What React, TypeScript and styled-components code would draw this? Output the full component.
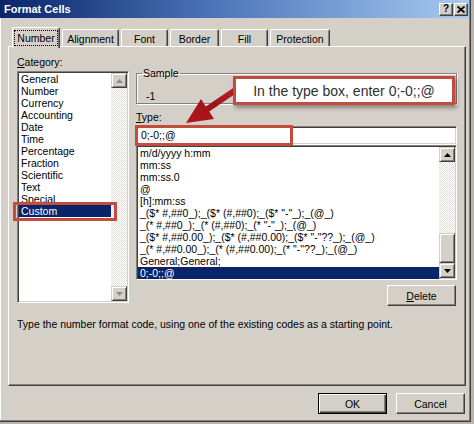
import React from 'react';
import styled, { createGlobalStyle } from 'styled-components';

const GlobalStyle = createGlobalStyle`
  html, body {
    margin: 0;
    padding: 0;
    background: #b8b4ac;
  }
  body {
    font-family: 'Liberation Sans', Arial, sans-serif;
    font-size: 10.5px;
    color: #000;
  }
`;

const Window = styled.div`
  position: relative;
  width: 471px;
  height: 422px;
  box-sizing: border-box;
  background: #d4d0c8;
  box-shadow: inset -1px -1px 0 #404040, inset -2px -2px 0 #808080,
    inset 1px 0 0 #fff;
  display: flex;
  flex-direction: column;
  overflow: hidden;
`;

const TitleBar = styled.div`
  height: 18px;
  margin-right: 2px;
  display: flex;
  align-items: center;
  justify-content: space-between;
  padding: 0 1px 0 4px;
  background: linear-gradient(to right, #0a246a 0%, #4a74b8 45%, #a6caf0 100%);
  color: #fff;
  font-size: 11px;
  font-weight: bold;
`;

const TitleButtons = styled.div`
  display: flex;
  gap: 1px;
`;

const TitleButton = styled.div`
  width: 14px;
  height: 13px;
  box-sizing: border-box;
  background: #d4d0c8;
  border: 1px solid;
  border-color: #fff #404040 #404040 #fff;
  box-shadow: inset -1px -1px 0 #808080;
  display: flex;
  align-items: center;
  justify-content: center;
  color: #000;
  font-size: 10px;
  font-weight: bold;
  line-height: 1;
`;

const Content = styled.div`
  flex: 1;
  display: flex;
  flex-direction: column;
  padding: 9px 5px 0 8px;
`;

const TabStrip = styled.div`
  height: 19px;
  display: flex;
  align-items: flex-end;
  gap: 2px;
  padding-left: 4px;
  position: relative;
  z-index: 1;
`;

const Tab = styled.div<{ $active?: boolean; $w: number }>`
  width: ${(p) => p.$w}px;
  height: ${(p) => (p.$active ? 21 : 17)}px;
  margin-bottom: ${(p) => (p.$active ? -2 : 0)}px;
  box-sizing: border-box;
  background: #d4d0c8;
  border-top: 1px solid #fff;
  border-left: 1px solid #fff;
  border-right: 1px solid #404040;
  box-shadow: inset -1px 0 0 #808080;
  border-radius: 2px 2px 0 0;
  display: flex;
  align-items: center;
  justify-content: center;
  padding-top: ${(p) => (p.$active ? 0 : 1)}px;
`;

const FocusText = styled.span`
  outline: 1px dotted #000;
  outline-offset: 1px;
  padding: 0 1px;
`;

const Panel = styled.div`
  width: 458px;
  height: 340px;
  box-sizing: border-box;
  border: 1px solid;
  border-color: #fff #404040 #404040 #fff;
  box-shadow: inset -1px -1px 0 #808080;
  padding: 9px 8px 0 8px;
  display: flex;
  flex-direction: column;
`;

const Columns = styled.div`
  display: flex;
  gap: 7px;
`;

const Column = styled.div<{ $w: number }>`
  width: ${(p) => p.$w}px;
  display: flex;
  flex-direction: column;
`;

const FieldLabel = styled.div<{ $gap?: number }>`
  line-height: 13px;
  height: 13px;
  margin-top: ${(p) => p.$gap ?? 0}px;
  margin-bottom: 2px;
`;

const GroupBox = styled.fieldset`
  margin: 11px 0 0;
  padding: 11px 9px 1px;
  min-inline-size: 0;
  border: 1px solid #808080;
  box-shadow: 1px 1px 0 #fff, inset 1px 1px 0 #fff;
  line-height: 12px;
  legend {
    padding: 0 1px;
    margin-left: -4px;
    line-height: 12px;
  }
`;

const SunkenBox = styled.div<{ $h: number }>`
  height: ${(p) => p.$h}px;
  box-sizing: border-box;
  background: #fff;
  border: 1px solid;
  border-color: #808080 #fff #fff #808080;
  box-shadow: inset 1px 1px 0 #404040, inset -1px -1px 0 #d4d0c8;
  padding: 1px;
  display: flex;
  overflow: hidden;
`;

const TextField = styled.div`
  height: 19px;
  box-sizing: border-box;
  background: #fff;
  border: 1px solid;
  border-color: #808080 #fff #fff #808080;
  box-shadow: inset 1px 1px 0 #404040, inset -1px -1px 0 #d4d0c8;
  padding: 0 4px;
  line-height: 17px;
`;

const Items = styled.div`
  flex: 1;
  min-width: 0;
  display: flex;
  flex-direction: column;
`;

const Item = styled.div<{ $selected?: boolean }>`
  height: 12px;
  flex: none;
  line-height: 12px;
  padding-left: 2px;
  white-space: nowrap;
  overflow: hidden;
  background: ${(p) => (p.$selected ? '#0a246a' : 'transparent')};
  color: ${(p) => (p.$selected ? '#fff' : '#000')};
`;

const ScrollBar = styled.div`
  width: 16px;
  flex: none;
  display: flex;
  flex-direction: column;
  background-color: #eeede9;
  background-image: repeating-conic-gradient(#fff 0 25%, #e2e0da 0 50%);
  background-size: 2px 2px;
`;

const ScrollButton = styled.div`
  height: 15px;
  flex: none;
  box-sizing: border-box;
  background: #d4d0c8;
  border: 1px solid;
  border-color: #d4d0c8 #404040 #404040 #d4d0c8;
  box-shadow: inset 1px 1px 0 #fff, inset -1px -1px 0 #808080;
  display: flex;
  align-items: center;
  justify-content: center;
`;

const Thumb = styled(ScrollButton)`
  height: 30px;
  margin-top: auto;
`;

const PushButton = styled.div<{ $default?: boolean }>`
  width: ${(p) => (p.$default ? 69 : 69)}px;
  height: 21px;
  box-sizing: border-box;
  background: #d4d0c8;
  border: 1px solid;
  border-color: ${(p) => (p.$default ? '#000' : '#fff #404040 #404040 #fff')};
  box-shadow: ${(p) =>
    p.$default
      ? 'inset 1px 1px 0 #fff, inset -1px -1px 0 #404040, inset -2px -2px 0 #808080'
      : 'inset -1px -1px 0 #808080'};
  display: flex;
  align-items: center;
  justify-content: center;
`;

const ButtonRow = styled.div<{ $gap: number; $top: number; $right?: number }>`
  display: flex;
  justify-content: flex-end;
  gap: ${(p) => p.$gap}px;
  margin-top: ${(p) => p.$top}px;
  padding-right: ${(p) => p.$right ?? 0}px;
`;

const Hint = styled.div`
  margin-top: 12px;
  line-height: 13px;
`;

const Key = styled.span`
  text-decoration: underline;
  text-underline-offset: 1px;
`;

const RedFrame = styled.div<{ $x: number; $y: number; $w: number; $h: number }>`
  position: absolute;
  left: ${(p) => p.$x}px;
  top: ${(p) => p.$y}px;
  width: ${(p) => p.$w}px;
  height: ${(p) => p.$h}px;
  box-sizing: border-box;
  border: 3px solid #c24c3f;
  pointer-events: none;
`;

const Callout = styled(RedFrame)`
  background: #fff;
  box-shadow: 2px 3px 4px rgba(0, 0, 0, 0.35);
  display: flex;
  align-items: center;
  justify-content: center;
  font-size: 14px;
  color: #2e2e2e;
  padding-top: 1px;
  z-index: 3;
`;

const Arrow = styled.svg`
  position: absolute;
  left: 180px;
  top: 80px;
  z-index: 2;
  pointer-events: none;
`;

const Triangle = ({ up, disabled }: { up?: boolean; disabled?: boolean }) => (
  <svg width="7" height="4" viewBox="0 0 7 4">
    <polygon
      points={up ? '3.5,0 7,4 0,4' : '0,0 7,0 3.5,4'}
      fill={disabled ? '#8e8c88' : '#000'}
    />
  </svg>
);

const categories = [
  'General',
  'Number',
  'Currency',
  'Accounting',
  'Date',
  'Time',
  'Percentage',
  'Fraction',
  'Scientific',
  'Text',
  'Special',
  'Custom',
];

const formats = [
  'm/d/yyyy h:mm',
  'mm:ss',
  'mm:ss.0',
  '@',
  '[h]:mm:ss',
  '_($* #,##0_);_($* (#,##0);_($* "-"_);_(@_)',
  '_(* #,##0_);_(* (#,##0);_(* "-"_);_(@_)',
  '_($* #,##0.00_);_($* (#,##0.00);_($* "-"??_);_(@_)',
  '_(* #,##0.00_);_(* (#,##0.00);_(* "-"??_);_(@_)',
  'General;General;',
  '0;-0;;@',
];

const tabs = [
  { label: 'Number', w: 48 },
  { label: 'Alignment', w: 57 },
  { label: 'Font', w: 47 },
  { label: 'Border', w: 49 },
  { label: 'Fill', w: 47 },
  { label: 'Protection', w: 60 },
];

export default function App() {
  return (
    <>
      <GlobalStyle />
      <Window>
        <TitleBar>
          <span>Format Cells</span>
          <TitleButtons>
            <TitleButton>?</TitleButton>
            <TitleButton>
              <svg width="8" height="7" viewBox="0 0 8 7">
                <path d="M0.5 0.5 L7.5 6.5 M7.5 0.5 L0.5 6.5" stroke="#000" strokeWidth="1.8" />
              </svg>
            </TitleButton>
          </TitleButtons>
        </TitleBar>

        <Content>
          <TabStrip>
            {tabs.map((t, i) => (
              <Tab key={t.label} $w={t.w} $active={i === 0}>
                {i === 0 ? <FocusText>{t.label}</FocusText> : t.label}
              </Tab>
            ))}
          </TabStrip>

          <Panel>
            <Columns>
              <Column $w={112}>
                <FieldLabel>
                  <Key>C</Key>ategory:
                </FieldLabel>
                <SunkenBox $h={232}>
                  <Items>
                    {categories.map((c) => (
                      <Item key={c} $selected={c === 'Custom'}>
                        {c}
                      </Item>
                    ))}
                  </Items>
                  <ScrollBar>
                    <ScrollButton>
                      <Triangle up disabled />
                    </ScrollButton>
                    <ScrollButton style={{ marginTop: 'auto' }}>
                      <Triangle disabled />
                    </ScrollButton>
                  </ScrollBar>
                </SunkenBox>
              </Column>

              <Column $w={321}>
                <GroupBox>
                  <legend>Sample</legend>
                  -1
                </GroupBox>
                <FieldLabel $gap={7}>
                  <Key>T</Key>ype:
                </FieldLabel>
                <TextField>0;-0;;@</TextField>
                <SunkenBox $h={135}>
                  <Items>
                    {formats.map((f, i) => (
                      <Item key={f} $selected={i === formats.length - 1}>
                        {f}
                      </Item>
                    ))}
                  </Items>
                  <ScrollBar>
                    <ScrollButton>
                      <Triangle up />
                    </ScrollButton>
                    <Thumb />
                    <ScrollButton>
                      <Triangle />
                    </ScrollButton>
                  </ScrollBar>
                </SunkenBox>
                <ButtonRow $gap={0} $top={5} $right={1}>
                  <PushButton>
                    <Key>D</Key>elete
                  </PushButton>
                </ButtonRow>
              </Column>
            </Columns>
            <Hint>
              Type the number format code, using one of the existing codes as a starting point.
            </Hint>
          </Panel>

          <ButtonRow $gap={9} $top={7} $right={1}>
            <PushButton $default>OK</PushButton>
            <PushButton>Cancel</PushButton>
          </ButtonRow>
        </Content>

        <RedFrame $x={13} $y={202} $w={104} $h={19} />
        <RedFrame $x={135} $y={125} $w={158} $h={21} />
        <Arrow width="62" height="50" viewBox="0 0 62 50">
          <defs>
            <linearGradient id="arrowFill" x1="0" y1="1" x2="1" y2="0">
              <stop offset="0" stopColor="#b5161c" />
              <stop offset="0.5" stopColor="#9c1419" />
              <stop offset="1" stopColor="#c2262a" />
            </linearGradient>
          </defs>
          <polygon
            points="6,43 21,19 25.8,26.5 58.3,4.5 61.7,9.5 29.2,31.5 34,39"
            fill="url(#arrowFill)"
          />
        </Arrow>
        <Callout $x={233} $y={76} $w={222} $h={29}>
          In the type box, enter 0;-0;;@
        </Callout>
      </Window>
    </>
  );
}
